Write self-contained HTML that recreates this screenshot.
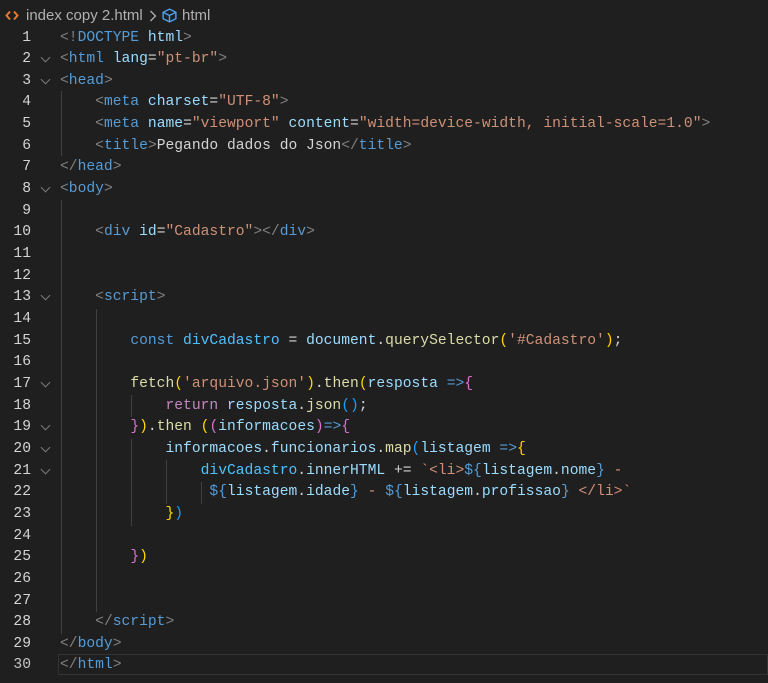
<!DOCTYPE html>
<html><head><meta charset="utf-8"><style>
html,body{margin:0;padding:0;background:#1f1f1f;width:768px;height:683px;overflow:hidden}
.bc{position:absolute;top:5px;left:0;height:22px;font:15px "Liberation Sans",sans-serif;color:#b0b0b0;line-height:22px}
.ln{position:absolute;left:0;width:31px;text-align:right;font:14.65px "Liberation Mono",monospace;color:#858585;}
.c{position:absolute;white-space:pre;font:14.65px "Liberation Mono",monospace;color:#d4d4d4;height:22px;line-height:22px}
.fold{position:absolute;left:42px;width:6px;height:6px;border-right:1px solid #7a7a7a;border-bottom:1px solid #7a7a7a;transform:rotate(45deg)}
.g{position:absolute;width:1px;background:#404040}
.t{color:#569cd6}.p{color:#808080}.a{color:#9cdcfe}.s{color:#ce9178}.f{color:#dcdcaa}.k{color:#c586c0}.v{color:#4fc1ff}
.y{color:#ffd700}.m{color:#da70d6}.b{color:#179fff}.w{color:#d4d4d4}
</style></head><body>
<svg style="position:absolute;left:5px;top:10px" width="14" height="11" viewBox="0 0 14 11"><path d="M5 1.5 L1.5 5.5 L5 9.5 M9 1.5 L12.5 5.5 L9 9.5" fill="none" stroke="#e37933" stroke-width="2"/></svg>
<div class="bc" style="left:26px">index copy 2.html</div>
<svg style="position:absolute;left:149px;top:10px" width="8" height="12" viewBox="0 0 8 12"><path d="M1.5 1 L6.5 6 L1.5 11" fill="none" stroke="#b0b0b0" stroke-width="1.3"/></svg>
<svg style="position:absolute;left:161px;top:7px" width="17" height="17" viewBox="0 0 16 16"><path d="M2 5 L8 2 L14 5 L14 11 L8 14 L2 11 Z M2 5 L8 8 L14 5 M8 8 L8 14" fill="none" stroke="#4fa3f0" stroke-width="1.3"/></svg>
<div class="bc" style="left:182px">html</div>

<div style="position:absolute;left:58px;top:654px;width:710px;height:21px;border:1px solid #333;box-sizing:border-box"></div>

<div class="g" style="left:61px;top:91px;height:65px"></div>
<div class="g" style="left:61px;top:200px;height:434px"></div>
<div class="g" style="left:96px;top:309px;height:303px"></div>
<div class="g" style="left:131px;top:395px;height:22px"></div>
<div class="g" style="left:131px;top:439px;height:87px"></div>
<div class="g" style="left:166px;top:460px;height:44px"></div>
<div class="g" style="left:201px;top:482px;height:22px"></div>

<div id="lines"></div>
<script>
const rows=[
[0,'<span class="p">&lt;!</span><span class="t">DOCTYPE</span> <span class="a">html</span><span class="p">&gt;</span>'],
[0,'<span class="p">&lt;</span><span class="t">html</span> <span class="a">lang</span>=<span class="s">"pt-br"</span><span class="p">&gt;</span>',1],
[0,'<span class="p">&lt;</span><span class="t">head</span><span class="p">&gt;</span>',1],
[4,'<span class="p">&lt;</span><span class="t">meta</span> <span class="a">charset</span>=<span class="s">"UTF-8"</span><span class="p">&gt;</span>'],
[4,'<span class="p">&lt;</span><span class="t">meta</span> <span class="a">name</span>=<span class="s">"viewport"</span> <span class="a">content</span>=<span class="s">"width=device-width, initial-scale=1.0"</span><span class="p">&gt;</span>'],
[4,'<span class="p">&lt;</span><span class="t">title</span><span class="p">&gt;</span>Pegando dados do Json<span class="p">&lt;/</span><span class="t">title</span><span class="p">&gt;</span>'],
[0,'<span class="p">&lt;/</span><span class="t">head</span><span class="p">&gt;</span>'],
[0,'<span class="p">&lt;</span><span class="t">body</span><span class="p">&gt;</span>',1],
[0,''],
[4,'<span class="p">&lt;</span><span class="t">div</span> <span class="a">id</span>=<span class="s">"Cadastro"</span><span class="p">&gt;&lt;/</span><span class="t">div</span><span class="p">&gt;</span>'],
[0,''],[0,''],
[4,'<span class="p">&lt;</span><span class="t">script</span><span class="p">&gt;</span>',1],
[0,''],
[8,'<span class="t">const</span> <span class="v">divCadastro</span> = <span class="a">document</span>.<span class="f">querySelector</span><span class="y">(</span><span class="s">\'#Cadastro\'</span><span class="y">)</span>;'],
[0,''],
[8,'<span class="f">fetch</span><span class="y">(</span><span class="s">\'arquivo.json\'</span><span class="y">)</span>.<span class="f">then</span><span class="y">(</span><span class="a">resposta</span> <span class="t">=&gt;</span><span class="m">{</span>',1],
[12,'<span class="k">return</span> <span class="a">resposta</span>.<span class="f">json</span><span class="b">()</span>;'],
[8,'<span class="m">}</span><span class="y">)</span>.<span class="f">then</span> <span class="y">(</span><span class="m">(</span><span class="a">informacoes</span><span class="m">)</span><span class="t">=&gt;</span><span class="m">{</span>',1],
[12,'<span class="a">informacoes</span>.<span class="a">funcionarios</span>.<span class="f">map</span><span class="b">(</span><span class="a">listagem</span> <span class="t">=&gt;</span><span class="y">{</span>',1],
[16,'<span class="v">divCadastro</span>.<span class="a">innerHTML</span> += <span class="s">`&lt;li&gt;</span><span class="t">${</span><span class="a">listagem</span>.<span class="a">nome</span><span class="t">}</span><span class="s"> -</span>',1],
[17,'<span class="t">${</span><span class="a">listagem</span>.<span class="a">idade</span><span class="t">}</span><span class="s"> - </span><span class="t">${</span><span class="a">listagem</span>.<span class="a">profissao</span><span class="t">}</span><span class="s"> &lt;/li&gt;`</span>'],
[12,'<span class="y">}</span><span class="b">)</span>'],
[0,''],
[8,'<span class="m">}</span><span class="y">)</span>'],
[0,''],[0,''],
[4,'<span class="p">&lt;/</span><span class="t">script</span><span class="p">&gt;</span>'],
[0,'<span class="p">&lt;/</span><span class="t">body</span><span class="p">&gt;</span>'],
[0,'<span class="p">&lt;/</span><span class="t">html</span><span class="p">&gt;</span>']
];
let h='';
rows.forEach((r,i)=>{const top=26.5+i*21.655;
h+=`<div class="ln c" style="top:${top}px;${i==29?'color:#c6c6c6':''}">${i+1}</div>`;
if(r[2])h+=`<div class="fold" style="top:${top+6}px"></div>`;
h+=`<div class="c" style="left:${60+r[0]*8.79}px;top:${top}px">${r[1]}</div>`;});
document.getElementById('lines').innerHTML=h;
</script>
</body></html>
